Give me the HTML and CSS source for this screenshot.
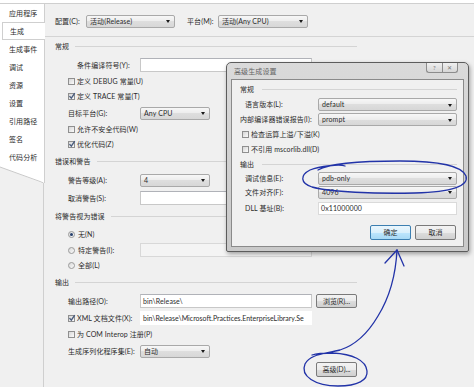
FILE: index.html
```html
<!DOCTYPE html>
<html lang="zh-CN">
<head>
<meta charset="utf-8">
<title>生成</title>
<link rel="stylesheet" href="styles.css">
</head>
<body>
<div class="window">
  <div class="topline"></div>
  <div class="body">
    <nav class="tabs">
      <div class="tablist">
        <div class="tab">应用程序</div>
        <div class="tab active">生成</div>
        <div class="tab">生成事件</div>
        <div class="tab">调试</div>
        <div class="tab">资源</div>
        <div class="tab">设置</div>
        <div class="tab">引用路径</div>
        <div class="tab">签名</div>
        <div class="tab">代码分析</div>
      </div>
      <svg class="tabs-end" width="45" height="17" viewBox="0 0 45 17">
        <polygon points="0,0 44,0 44,17 42,17 0,1" fill="#ffffff"/>
        <path d="M0 1 L40 15.5 L43.5 17" fill="none" stroke="#c9c9c9" stroke-width="1"/>
        <path d="M44.5 0 V17" stroke="#cfcfcf" stroke-width="1"/>
      </svg>
      <div class="tabs-rest"></div>
    </nav>

    <main class="content">
      <div class="config">
        <span class="cfg-label">配置(C):</span>
        <div class="select cfg-select">活动(Release)</div>
        <span class="cfg-label plat">平台(M):</span>
        <div class="select cfg-select wide">活动(Any CPU)</div>
      </div>
      <div class="sep"></div>

      <section class="group">
        <div class="gtitle">常规</div>
        <div class="row tall"><span class="lbl indent">条件编译符号(Y):</span><div class="input"></div></div>
        <div class="row short"><label class="chk"><span class="cb"></span>定义 DEBUG 常量(U)</label></div>
        <div class="row short"><label class="chk"><span class="cb on"><svg viewBox="0 0 7 7"><path d="M1.3 3.6 L2.9 5.4 L5.9 0.9"/></svg></span>定义 TRACE 常量(T)</label></div>
        <div class="row tall"><span class="lbl">目标平台(G):</span><div class="select small">Any CPU</div></div>
        <div class="row short"><label class="chk"><span class="cb"></span>允许不安全代码(W)</label></div>
        <div class="row short"><label class="chk"><span class="cb on"><svg viewBox="0 0 7 7"><path d="M1.3 3.6 L2.9 5.4 L5.9 0.9"/></svg></span>优化代码(Z)</label></div>
      </section>

      <section class="group">
        <div class="gtitle">错误和警告</div>
        <div class="row tall"><span class="lbl">警告等级(A):</span><div class="select small">4</div></div>
        <div class="row tall"><span class="lbl">取消警告(S):</span><div class="input"></div></div>
      </section>

      <section class="group">
        <div class="gtitle">将警告视为错误</div>
        <div class="row"><label class="chk"><span class="rb on"></span>无(N)</label></div>
        <div class="row"><label class="lbl chk"><span class="rb"></span>特定警告(I):</label><div class="input disabled"></div></div>
        <div class="row short"><label class="chk"><span class="rb"></span>全部(L)</label></div>
      </section>

      <section class="group">
        <div class="gtitle">输出</div>
        <div class="row tall"><span class="lbl">输出路径(O):</span><div class="input">bin\Release\</div><button class="btn browse">浏览(R)...</button></div>
        <div class="row"><label class="lbl chk"><span class="cb on"><svg viewBox="0 0 7 7"><path d="M1.3 3.6 L2.9 5.4 L5.9 0.9"/></svg></span>XML 文档文件(X):</label><div class="input plain">bin\Release\Microsoft.Practices.EnterpriseLibrary.Se</div></div>
        <div class="row"><label class="chk"><span class="cb"></span>为 COM Interop 注册(P)</label></div>
        <div class="row tall"><span class="lbl">生成序列化程序集(E):</span><div class="select small">自动</div></div>
        <div class="row tall end"><button class="btn">高级(D)...</button></div>
      </section>
    </main>
  </div>
</div>

<div class="dialog">
  <div class="dtitle">
    <span>高级生成设置</span>
    <div class="dbtns"><span class="dbtn">?</span><span class="dbtn">✕</span></div>
  </div>
  <div class="dpanel">
    <div class="dhead">常规</div>
    <div class="drow"><span class="dlbl">语言版本(L):</span><div class="select dsel">default</div></div>
    <div class="drow"><span class="dlbl out">内部编译器错误报告(I):</span><div class="select dsel">prompt</div></div>
    <div class="drow"><label class="chk dchk"><span class="cb"></span>检查运算上溢/下溢(K)</label></div>
    <div class="drow"><label class="chk dchk"><span class="cb"></span>不引用 mscorlib.dll(D)</label></div>
    <div class="dhead sub">输出</div>
    <div class="drow tight"><span class="dlbl">调试信息(E):</span><div class="select dsel">pdb-only</div></div>
    <div class="drow tight"><span class="dlbl">文件对齐(F):</span><div class="select dsel">4096</div></div>
    <div class="drow field"><span class="dlbl">DLL 基址(B):</span><div class="input dinput">0x11000000</div></div>
    <div class="dbuttons"><button class="btn default">确定</button><button class="btn">取消</button></div>
  </div>
</div>

<svg class="ink" width="474" height="387" viewBox="0 0 474 387">
  <g fill="none" stroke="#2233a8" stroke-width="1.3" stroke-linecap="round" stroke-linejoin="round">
    <path d="M318 170 C 330 163, 360 161, 400 161 C 440 161, 462 166, 466 176 C 469 186, 452 192, 415 193 C 375 194, 330 192, 312 187 C 300 183, 300 175, 310 170 C 320 166, 340 164, 345 166"/>
    <path d="M397 250 C 396 270, 391 295, 378 316 C 368 333, 356 345, 340 350 C 325 354, 310 354, 305 364 C 300 376, 315 386, 338 386 C 358 386, 368 380, 367 371 C 366 360, 352 354, 333 353 C 322 353, 315 354, 312 355"/>
    <path d="M385 263 L397 250 L404 266"/>
  </g>
</svg>
</body>
</html>
```

FILE: styles.css
```css
* { box-sizing: border-box; }
html, body { margin: 0; padding: 0; }
body {
  width: 474px;
  height: 387px;
  overflow: hidden;
  position: relative;
  background: #f0f0f0;
  font-family: Lato, "Noto Sans CJK SC", sans-serif;
  font-size: 7px;
  line-height: 1;
  letter-spacing: 0.1px;
  color: #2b2b2b;
}

.window { display: flex; flex-direction: column; height: 387px; }
.topline { flex: none; height: 4px; background: #ffffff; border-bottom: 1px solid #cfcfcf; }
.body { flex: 1; display: flex; min-height: 0; }

/* left tab strip */
.tabs { flex: none; width: 45px; display: flex; flex-direction: column; }
.tablist { background: #ffffff; border-right: 1px solid #cfcfcf; }
.tab { height: 18px; line-height: 18px; padding-left: 9px; white-space: nowrap; }
.tab.active {
  margin-left: 2px;
  margin-right: -1px;
  padding-left: 7px;
  line-height: 16px;
  border: 1px solid #cfcfcf;
  border-right: 0;
  background: #ffffff;
}
.tabs-end { display: block; flex: none; }
.tabs-rest { flex: 1; border-right: 1px solid #cfcfcf; margin-right: 1px; }

/* content */
.content { flex: 1; padding-left: 10px; display: flex; flex-direction: column; }
.config { height: 32px; padding-top: 2px; display: flex; align-items: center; }
.cfg-label { width: 31px; flex: none; white-space: nowrap; }
.cfg-label.plat { margin-left: 12px; }
.cfg-select { width: 89px; }
.cfg-select.wide { width: 90px; }
.sep { height: 1px; background: #d4d4d4; margin-left: -10px; flex: none; }

.group { width: 302px; display: flex; flex-direction: column; }
.gtitle { height: 19px; padding-bottom: 1px; display: flex; align-items: center; white-space: nowrap; }
.gtitle::after { content: ""; flex: 1; height: 1px; background: #d4d4d4; margin-left: 6px; }

.row { height: 16px; padding-left: 13px; display: flex; align-items: center; flex: none; }
.row.tall { height: 18px; }
.row.short { height: 15px; }
.row.end { justify-content: flex-end; }
.lbl { width: 72px; flex: none; white-space: nowrap; }
.lbl.indent { padding-left: 9px; }
.chk { display: flex; align-items: center; white-space: nowrap; }

/* controls */
.input {
  width: 172px;
  height: 14px;
  background: #ffffff;
  border: 1px solid #c8c8c8;
  border-top-color: #b0b2b8;
  padding-left: 2px;
  display: flex;
  align-items: center;
  overflow: hidden;
  white-space: nowrap;
}
.input.disabled { background: #f4f4f4; border-color: #d8d8d8; }
.input.plain { border-color: #ffffff; letter-spacing: 0; }

.select {
  position: relative;
  height: 13px;
  border: 1px solid #a9a9a9;
  border-radius: 2px;
  background: linear-gradient(#f7f7f7, #ececec 50%, #dedede 50%, #d7d7d7);
  padding-left: 3px;
  display: flex;
  align-items: center;
  white-space: nowrap;
  flex: none;
}
.select::after {
  content: "";
  position: absolute;
  right: 4px;
  top: 50%;
  margin-top: -1px;
  border-left: 2px solid transparent;
  border-right: 2px solid transparent;
  border-top: 3px solid #1a1a1a;
}
.select.small { width: 70px; }

.cb {
  width: 7px;
  height: 7px;
  flex: none;
  margin-right: 2px;
  border: 1px solid #8f8f8f;
  background: linear-gradient(135deg, #d6d6d6, #fbfbfb);
  position: relative;
}
.cb svg { position: absolute; left: -1px; top: -2px; width: 8px; height: 8px; overflow: visible; }
.cb svg path { fill: none; stroke: #4a5d7e; stroke-width: 1.2; }
.rb {
  width: 7px;
  height: 7px;
  flex: none;
  margin-right: 3px;
  border-radius: 50%;
  border: 1px solid #9a9a9a;
  background: linear-gradient(135deg, #d8d8d8, #fafafa);
  position: relative;
}
.rb.on::after {
  content: "";
  position: absolute;
  left: 1px;
  top: 1px;
  width: 3px;
  height: 3px;
  border-radius: 50%;
  background: #27406e;
}

.btn {
  width: 41px;
  height: 15px;
  padding: 0;
  font: inherit;
  color: #2b2b2b;
  border: 1px solid #7a7a7a;
  border-radius: 2px;
  background: linear-gradient(#f3f3f3, #ebebeb 50%, #dddddd 50%, #d0d0d0);
  display: flex;
  align-items: center;
  justify-content: center;
  white-space: nowrap;
  flex: none;
}
.btn.browse { margin-left: 4px; height: 14px; }

/* dialog */
.dialog {
  position: absolute;
  left: 226px;
  top: 62px;
  width: 243px;
  height: 190px;
  border: 1px solid #5c5c5c;
  border-radius: 5px 5px 2px 2px;
  background: linear-gradient(#dadada, #c9c9c9);
  padding: 0 4px 4px;
  box-shadow: 1px 2px 4px rgba(0, 0, 0, 0.35);
  display: flex;
  flex-direction: column;
}
.dtitle {
  height: 16px;
  flex: none;
  padding-left: 3px;
  display: flex;
  align-items: center;
  justify-content: space-between;
  color: #646464;
}
.dbtns { align-self: flex-start; display: flex; margin-right: 6px; }
.dbtn {
  width: 16px;
  height: 10px;
  border: 1px solid #8c8c8c;
  border-top: 0;
  background: linear-gradient(#f0f0f0, #d6d6d6);
  color: #777777;
  font-size: 6px;
  display: flex;
  align-items: center;
  justify-content: center;
}
.dbtn:first-child { border-radius: 0 0 0 3px; border-right: 0; }
.dbtn:last-child { border-radius: 0 0 3px 0; }

.dpanel {
  flex: 1;
  background: #f0f0f0;
  border: 1px solid #8a8a8a;
  padding: 1px 6px 0 8px;
  display: flex;
  flex-direction: column;
}
.dhead { height: 16px; display: flex; align-items: center; white-space: nowrap; flex: none; }
.dhead.sub { height: 14px; }
.dhead::after { content: ""; flex: 1; height: 1px; background: #d4d4d4; margin-left: 8px; }
.drow { height: 15px; padding-left: 5px; display: flex; align-items: center; flex: none; }
.drow.tight { height: 14px; }
.drow.field { height: 18px; }
.dlbl { width: 73px; flex: none; white-space: nowrap; }
.dlbl.out { margin-left: -5px; width: 78px; }
.dchk { margin-left: -3px; }
.dsel { width: 139px; }
.dinput { width: 139px; height: 13px; border-color: #dadada; }
.dbuttons { margin-top: 8px; display: flex; justify-content: flex-end; gap: 4px; padding-right: 1px; }
.btn.default {
  border-color: #3c7fb1;
  background: linear-gradient(#eaf6fd, #d9f0fc 50%, #bee6fd 50%, #a7d9f5);
}

.ink { position: absolute; left: 0; top: 0; pointer-events: none; }
```
